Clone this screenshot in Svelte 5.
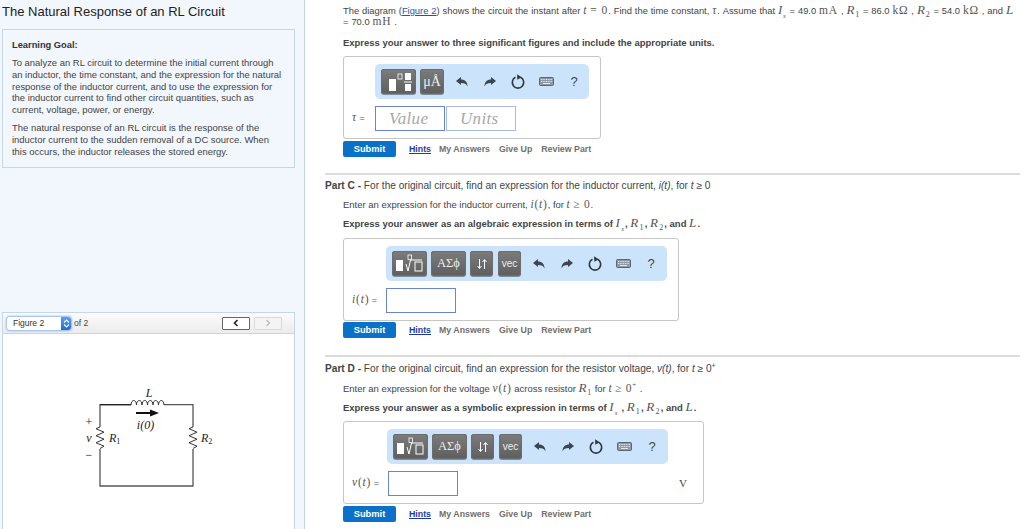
<script>
  const links = ['My Answers', 'Give Up', 'Review Part'];
  const mathButtons = ['ΑΣϕ', 'sort', 'vec'];
</script>

{#snippet tools()}
  <svg width="14" height="12" viewBox="0 0 14 12"><path d="M1 5 6 1v2.400c4 0 6.500 2.300 6.500 7-1.200-2.600-3-3.500-6.500-3.500V9z" fill="#3d4650"/></svg>
  <svg width="14" height="12" viewBox="0 0 14 12"><path d="M13 5 8 1v2.400c-4 0-6.500 2.300-6.500 7C2.700 7.800 4.500 6.900 8 6.900V9z" fill="#3d4650"/></svg>
  <svg width="16" height="16" viewBox="0 0 14 14"><path d="M9.200 2.900a5 5 0 1 1-4.400 0" fill="none" stroke="#2f3840" stroke-width="1.400"/><path d="M6.200 0.300 10.200 2.800 6.400 5z" fill="#2f3840"/></svg>
  <svg width="15" height="9" viewBox="0 0 15 9"><rect x=".5" y=".5" width="14" height="8" rx="1" fill="#8e9aa6" stroke="#5b6670"/><path d="M2 2.500h11M2 4.500h11" stroke="#dfe6ec" stroke-dasharray="1 .7"/><path d="M4 6.500h7" stroke="#dfe6ec"/></svg>
  <span class="help">?</span>
{/snippet}

{#snippet mathBar()}
  <div class="toolbar wide">
    <span class="tbtn tmpl">
      <svg width="33" height="22" viewBox="0 0 33 22">
        <rect x="3" y="7" width="7" height="11" fill="#fff"/>
        <path d="M13 11l2 7 2.500-11H29" fill="none" stroke="#fff"/>
        <rect x="15" y="2" width="3.500" height="4.500" fill="none" stroke="#fff" stroke-width=".8"/>
        <rect x="22" y="9" width="7" height="9" fill="none" stroke="#fff"/>
      </svg>
    </span>
    {#each mathButtons as b}
      <span class="tbtn {b}">
        {#if b === 'sort'}
          <svg width="12" height="12" viewBox="0 0 12 12"><path d="M3.500 1v9M1.500 8l2 2.500L5.500 8M8.500 11V2M6.500 4l2-2.500L10.500 4" fill="none" stroke="#fff"/></svg>
        {:else}
          {b}
        {/if}
      </span>
    {/each}
    <div class="tools">{@render tools()}</div>
  </div>
{/snippet}

{#snippet actions()}
  <div class="actions">
    <button class="submit">Submit</button>
    <a class="hints" href="#hints">Hints</a>
    {#each links as l}<span class="alink">{l}</span>{/each}
  </div>
{/snippet}

<div class="page">
  <aside class="side">
    <h1>The Natural Response of an RL Circuit</h1>
    <section class="goal">
      <h2>Learning Goal:</h2>
      <p>To analyze an RL circuit to determine the initial current through an inductor, the time constant, and the expression for the natural response of the inductor current, and to use the expression for the inductor current to find other circuit quantities, such as current, voltage, power, or energy.</p>
      <p>The natural response of an RL circuit is the response of the inductor current to the sudden removal of a DC source. When this occurs, the inductor releases the stored energy.</p>
    </section>
    <section class="figure">
      <header>
        <span class="select">Figure 2<span class="stepper"><svg width="7" height="9" viewBox="0 0 7 9"><path d="M1 3.500 3.500 1 6 3.500M1 5.500 3.500 8 6 5.500" fill="none" stroke="#fff" stroke-width="1.100"/></svg></span></span>
        <span class="of">of 2</span>
        <span class="pager">
          <span class="nav on"><svg width="6" height="8" viewBox="0 0 6 8"><path d="M4.500 1 1.500 4l3 3" fill="none" stroke="#222" stroke-width="1.600"/></svg></span>
          <span class="nav"><svg width="6" height="8" viewBox="0 0 6 8"><path d="M1.500 1 4.500 4l-3 3" fill="none" stroke="#bbb" stroke-width="1.200"/></svg></span>
        </span>
      </header>
      <svg class="circuit" width="291" height="196" viewBox="3 333 291 196">
        <path d="M100 426V403.700H131M164 403.700H193V426M193 448V485H100V448" fill="none" stroke="#555" stroke-width="1.300"/>
        <path d="M100 403.700H131" stroke="#222" stroke-width="1.200"/>
        <path d="M131 404c0-6 5.500-6 5.500 0 0-6 5.500-6 5.500 0 0-6 5.500-6 5.500 0 0-6 5.500-6 5.500 0 0-6 5.500-6 5.500 0 0-6 5.500-6 5.500 0" fill="none" stroke="#333"/>
        <path d="M100 426l-4 1.700 8 3.500-8 3.500 8 3.500-8 3.500 8 3.500-4 2.300" fill="none" stroke="#333"/>
        <path d="M193 426l-4 1.700 8 3.500-8 3.500 8 3.500-8 3.500 8 3.500-4 2.300" fill="none" stroke="#333"/>
        <path d="M136 412h16" stroke="#111" stroke-width="2"/>
        <path d="M150 408.500l9 3.500-9 3.500z" fill="#111"/>
        <text x="149" y="396" class="ct">L</text>
        <text x="145.500" y="428" class="ct">i(0)</text>
        <text x="89" y="425" class="cn">+</text>
        <text x="89" y="441" class="ct">v</text>
        <text x="89" y="458" class="cn">−</text>
        <text x="109" y="441" class="ct left">R<tspan class="sub" dy="2">1</tspan></text>
        <text x="201" y="441" class="ct left">R<tspan class="sub" dy="2">2</tspan></text>
      </svg>
    </section>
  </aside>

  <main class="content">
    <div class="indent first">
      <p class="line">The diagram (<a href="#fig">Figure 2</a>) shows the circuit the instant after <i class="m">t</i> <span class="m">= 0</span>. Find the time constant, <i class="m">τ</i>. Assume that <i class="m big">I<sub>s</sub></i> = 49.0 <span class="m">mA</span> , <i class="m big">R</i><sub class="m">1</sub> = 86.0 <span class="m">kΩ</span> , <i class="m big">R</i><sub class="m">2</sub> = 54.0 <span class="m">kΩ</span> , and <i class="m big">L</i><br>= 70.0 <span class="m">mH</span> .</p>
      <p class="bold gap1">Express your answer to three significant figures and include the appropriate units.</p>
      <div class="answer b">
        <div class="toolbar narrow">
          <span class="tbtn tmpl2">
            <svg width="29" height="22" viewBox="0 0 29 22">
              <rect x="5" y="8" width="7" height="12" fill="#fff"/>
              <rect x="14" y="3" width="4" height="5" fill="none" stroke="#fff" stroke-width=".8"/>
              <rect x="21" y="2" width="6" height="7" fill="#fff"/>
              <path d="M20 11h8" stroke="#fff"/>
              <rect x="21" y="13" width="6" height="7" fill="#fff"/>
            </svg>
          </span>
          <span class="tbtn unit">μÅ</span>
          <div class="tools">{@render tools()}</div>
        </div>
        <div class="row rowb">
          <span class="lbl"><i class="m">τ</i> =</span>
          <span class="field ph">Value</span>
          <span class="field ph">Units</span>
        </div>
      </div>
      {@render actions()}
    </div>

    <hr class="rule r1" />

    <h3 class="hc"><b>Part C -</b> For the original circuit, find an expression for the inductor current, <i>i(t)</i>, for <i>t</i> ≥ 0</h3>
    <div class="indent partc">
      <p class="line g2">Enter an expression for the inductor current, <i class="m">i</i><span class="m">(</span><i class="m">t</i><span class="m">)</span>, for <i class="m">t</i> <span class="m">≥ 0</span>.</p>
      <p class="bold g3">Express your answer as an algebraic expression in terms of <i class="m big">I<sub>s</sub></i>, <i class="m big">R</i><sub class="m">1</sub>, <i class="m big">R</i><sub class="m">2</sub>, and <i class="m big">L</i>.</p>
      <div class="answer c">
        {@render mathBar()}
        <div class="row rowc">
          <span class="lbl"><i class="m">i</i><span class="m">(</span><i class="m">t</i><span class="m">)</span> =</span>
          <span class="field"></span>
        </div>
      </div>
      {@render actions()}
    </div>

    <hr class="rule r2" />

    <h3 class="hd"><b>Part D -</b> For the original circuit, find an expression for the resistor voltage, <i>v(t)</i>, for <i>t</i> ≥ 0<sup>+</sup></h3>
    <div class="indent partd">
      <p class="line g2">Enter an expression for the voltage <i class="m">v</i><span class="m">(</span><i class="m">t</i><span class="m">)</span> across resistor <i class="m big">R</i><sub class="m">1</sub> for <i class="m">t</i> <span class="m">≥ 0<sup>+</sup></span> .</p>
      <p class="bold g3">Express your answer as a symbolic expression in terms of <i class="m big">I<sub>s</sub></i> , <i class="m big">R</i><sub class="m">1</sub>, <i class="m big">R</i><sub class="m">2</sub>, and <i class="m big">L</i>.</p>
      <div class="answer d">
        {@render mathBar()}
        <div class="row rowd">
          <span class="lbl"><i class="m">v</i><span class="m">(</span><i class="m">t</i><span class="m">)</span> =</span>
          <span class="field"></span>
          <span class="volt">V</span>
        </div>
      </div>
      {@render actions()}
    </div>
  </main>
</div>

<style>
  :global(body) {
    background: #fff;
    overflow: hidden;
  }

  .page {
    display: flex;
    width: 1024px;
    height: 529px;
    overflow: hidden;
    font-family: "Liberation Sans", Arial, sans-serif;
    color: #333;
  }

  .side {
    flex: none;
    width: 305px;
    height: 529px;
    box-sizing: border-box;
    padding: 0 9px 0 2px;
    background: #f2f6fd;
    border-right: 1px solid #c6d5e4;
  }

  h1 {
    margin: 4px 0 10px;
    font-size: 13px;
    font-weight: 400;
    line-height: 15px;
    color: #222;
  }

  .goal {
    box-sizing: border-box;
    height: 139px;
    padding: 10px 11px 0 9px;
    font-size: 9.450px;
    line-height: 11.800px;
    color: #444;
    border: 1px solid #c5d6e6;
  }

  h2 {
    margin: 0 0 6px;
    font-size: 9.300px;
    line-height: 11px;
    color: #333;
  }

  .goal p {
    margin: 0 0 6.500px;
  }

  .figure {
    height: 230px;
    margin-top: 144px;
    background: #fff;
    border: 1px solid #c5d6e6;
    border-bottom: 0;
  }

  .figure header {
    display: flex;
    align-items: center;
    height: 20px;
    padding: 0 12px 0 4px;
    background: linear-gradient(#fbfbfb, #ececec);
    border-bottom: 1px solid #c5d6e6;
    font-size: 8.500px;
  }

  .select {
    display: flex;
    align-items: center;
    justify-content: space-between;
    box-sizing: border-box;
    width: 64px;
    height: 13px;
    padding-left: 6px;
    background: #fff;
    border-radius: 3px;
    box-shadow: 0 0 2px 1px #8db8ee;
    color: #333;
  }

  .stepper {
    display: flex;
    align-items: center;
    justify-content: center;
    width: 10px;
    height: 13px;
    background: linear-gradient(#5aa0f0, #1e6bd6);
    border-radius: 0 3px 3px 0;
  }

  .of {
    margin-left: 3px;
    color: #444;
  }

  .pager {
    display: flex;
    gap: 4px;
    margin-left: auto;
  }

  .nav {
    display: flex;
    align-items: center;
    justify-content: center;
    box-sizing: border-box;
    width: 28px;
    height: 13px;
    background: #f4f4f4;
    border: 1px solid #d8d8d8;
    border-radius: 1px;
  }

  .nav.on {
    background: #fff;
    border-color: #666;
  }

  .circuit {
    display: block;
  }

  .ct {
    font-family: "Liberation Serif", serif;
    font-style: italic;
    font-size: 12px;
    text-anchor: middle;
    fill: #222;
  }

  .ct.left {
    text-anchor: start;
  }

  .sub {
    font-size: 8px;
    font-style: normal;
  }

  .cn {
    font-family: "Liberation Serif", serif;
    font-size: 12px;
    text-anchor: middle;
    fill: #222;
  }

  .content {
    flex: none;
    width: 695px;
    margin-left: 20px;
    font-size: 9.480px;
    line-height: 11px;
    color: #444;
  }

  .indent {
    padding-left: 18px;
  }

  .first {
    padding-top: 6px;
  }

  p {
    margin: 0;
  }

  .line {
    white-space: nowrap;
  }

  .first .line {
    font-size: 9.360px;
    word-spacing: .35px;
  }

  .line a {
    color: #1a55b5;
  }

  .bold {
    font-weight: 700;
    white-space: nowrap;
    color: #444;
  }

  .gap1 {
    margin-top: 9px;
  }

  .g2 {
    margin-top: 7px;
    height: 12px;
    line-height: 12px;
  }

  .g3 {
    margin-top: 7px;
    height: 12px;
    line-height: 12px;
  }

  .partd .g2 {
    margin-top: 8px;
  }

  .m {
    font-family: "Liberation Serif", serif;
    font-size: 11.500px;
    font-weight: 400;
    line-height: 0;
    letter-spacing: .8px;
    color: #555;
  }

  .m.big {
    font-size: 13px;
  }

  .bold .m {
    letter-spacing: 1.200px;
  }

  sub {
    font-size: 7px;
    line-height: 0;
  }

  sub.m {
    font-size: 8px;
  }

  sup {
    font-size: 7px;
    line-height: 0;
  }

  .answer {
    box-sizing: border-box;
    height: 83px;
    margin-top: 8px;
    padding-top: 7px;
    background: #fff;
    border: 1px solid #c6c6c6;
    border-radius: 3px;
  }

  .answer.b {
    width: 258px;
  }

  .answer.c {
    width: 336px;
  }

  .answer.d {
    width: 361px;
    margin-top: 7px;
  }

  .toolbar {
    display: flex;
    align-items: center;
    box-sizing: border-box;
    height: 35px;
    padding: 0 0 0 6px;
    background: #cbe4fb;
    border-radius: 5px;
  }

  .narrow {
    width: 214px;
    margin-left: 31px;
  }

  .wide {
    width: 281px;
    margin-left: 42px;
  }

  .d .wide {
    margin-left: 43px;
  }

  .tbtn {
    display: flex;
    align-items: center;
    justify-content: center;
    flex: none;
    box-sizing: border-box;
    height: 25px;
    margin-right: 4px;
    background: linear-gradient(#7c7c7c, #5e5e5e);
    border-radius: 3px;
    box-shadow: inset 0 0 0 1px #6d6d6d, 0 1px 0 #7d8b98;
    color: #eee;
  }

  .tmpl,
  .tmpl2 {
    width: 35px;
  }

  .unit {
    width: 24px;
    font-family: "Liberation Serif", serif;
    font-size: 14px;
  }

  .ΑΣϕ {
    width: 35px;
    font-family: "Liberation Serif", serif;
    font-size: 12.500px;
  }

  .sort {
    width: 23px;
    margin-right: 5px;
  }

  .vec {
    width: 23px;
    font-size: 10px;
  }

  .tools {
    display: grid;
    grid-template-columns: repeat(5, 28px);
    align-items: center;
    justify-items: center;
  }

  .help {
    font-size: 13px;
    color: #444;
  }

  .row {
    display: flex;
    align-items: center;
    gap: 1px;
    margin-top: 7px;
    padding-left: 8px;
  }

  .lbl {
    flex: none;
    width: 22px;
    white-space: nowrap;
    font-size: 9px;
    color: #555;
  }

  .rowc .lbl {
    width: 33px;
  }

  .rowd .lbl {
    width: 35px;
  }

  .field {
    display: block;
    flex: none;
    box-sizing: border-box;
    width: 70px;
    height: 25px;
    background: #fff;
    border: 1px solid #6b83d0;
  }

  .ph {
    padding-left: 13px;
    font-family: "Liberation Serif", serif;
    font-style: italic;
    font-size: 17px;
    line-height: 24px;
    letter-spacing: .3px;
    color: #a8a8a8;
  }

  .ph + .ph {
    border-color: #a9bce8;
  }

  .volt {
    margin-left: auto;
    margin-right: 16px;
    font-family: "Liberation Serif", serif;
    font-size: 11px;
    color: #444;
  }

  .actions {
    display: flex;
    align-items: center;
    height: 16px;
    margin-top: 2px;
    font-size: 8.800px;
    font-weight: 700;
  }

  .partc .actions {
    margin-top: 1px;
  }

  .submit {
    box-sizing: border-box;
    width: 53px;
    height: 16px;
    margin-right: 13px;
    padding: 0;
    font: 700 9.300px "Liberation Sans", Arial, sans-serif;
    color: #fff;
    background: #0a71c9;
    border: 0;
    border-radius: 2px;
  }

  .hints {
    margin-right: 8px;
    color: #1d3aa8;
  }

  .alink {
    margin-right: 9px;
    color: #707070;
  }

  .rule {
    height: 2px;
    margin: 0;
    background: #dcdcdc;
    border: 0;
  }

  .r1 {
    margin-top: 16px;
  }

  .r2 {
    margin-top: 17px;
  }

  h3 {
    margin: 5px 0 0;
    font-size: 10.150px;
    font-weight: 400;
    line-height: 12px;
    color: #444;
  }

  .hd {
    margin-top: 6px;
  }
</style>
